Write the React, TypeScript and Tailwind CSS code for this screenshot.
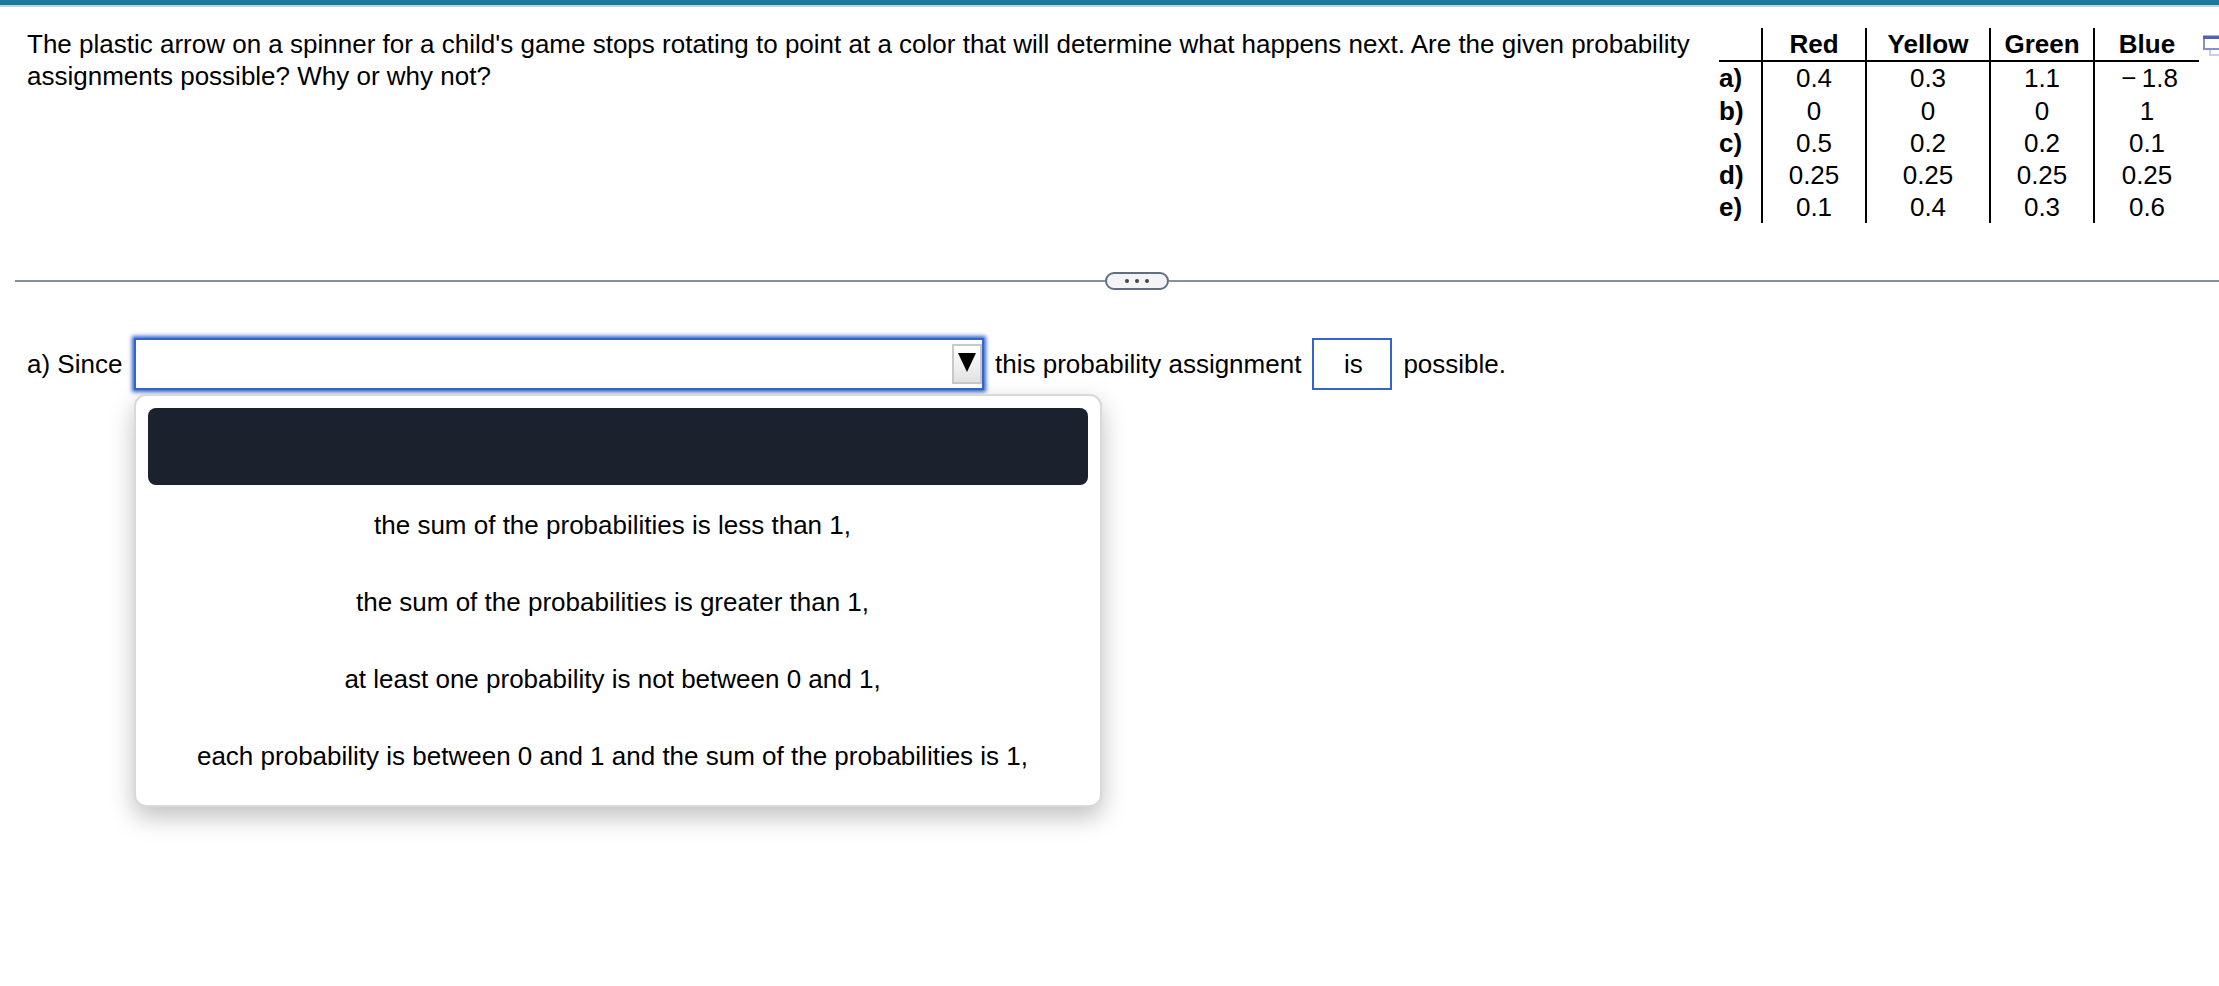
import React, { useState } from 'react';

const colors = ['Red', 'Yellow', 'Green', 'Blue'];

const colorWidths = ['w-[104px]', 'w-[124px]', 'w-[104px]', 'w-[105px]'];

const rows = [
  { label: 'a)', values: ['0.4', '0.3', '1.1', '\u2009−\u20091.8'] },
  { label: 'b)', values: ['0', '0', '0', '1'] },
  { label: 'c)', values: ['0.5', '0.2', '0.2', '0.1'] },
  { label: 'd)', values: ['0.25', '0.25', '0.25', '0.25'] },
  { label: 'e)', values: ['0.1', '0.4', '0.3', '0.6'] },
];

const reasons = [
  '',
  'the sum of the probabilities is less than 1,',
  'the sum of the probabilities is greater than 1,',
  'at least one probability is not between 0 and 1,',
  'each probability is between 0 and 1 and the sum of the probabilities is 1,',
];

const ProbabilityTable: React.FC = () => (
  <table className="shrink-0 table-fixed border-collapse text-center">
    <thead>
      <tr className="border-b-2 border-black">
        <td className="w-[43px] p-0"></td>
        {colors.map((color, i) => (
          <th key={color} scope="col" className={`${colorWidths[i]} border-l-2 border-black p-0 font-bold`}>
            {color}
          </th>
        ))}
      </tr>
    </thead>
    <tbody>
      {rows.map((row) => (
        <tr key={row.label} className="align-top first:h-[34px]">
          <th scope="row" className="p-0 text-left font-bold">{row.label}</th>
          {row.values.map((value, i) => (
            <td key={colors[i]} className="border-l-2 border-black p-0">{value}</td>
          ))}
        </tr>
      ))}
    </tbody>
  </table>
);

const PopupIcon: React.FC = () => (
  <svg width="28" height="22" viewBox="0 0 28 22" fill="none">
    <rect x="7" y="9" width="20" height="11" fill="#fff" stroke="#c9cde9" strokeWidth="2" />
    <rect x="1" y="2" width="20" height="12" fill="#fff" stroke="#8790ca" strokeWidth="2" />
    <rect x="0" y="0" width="22" height="1" fill="#a9b0da" />
    <rect x="0" y="1" width="22" height="3" fill="#5460ad" />
  </svg>
);

const App: React.FC = () => {
  const [reason, setReason] = useState('');
  const [verdict, setVerdict] = useState('is');
  const [open, setOpen] = useState(true);

  const pickReason = (value: string) => {
    setReason(value);
    setOpen(false);
  };

  return (
    <div className="min-h-screen overflow-hidden bg-white font-['Liberation_Sans',Arial,sans-serif] text-[26px] leading-8 text-black">
      <div className="h-[7px] border-b-2 border-[#c9cde0] bg-[#187a9b]"></div>

      <section className="flex items-start pt-[21px] pl-[27px]">
        <p className="min-w-0 flex-1">
          The plastic arrow on a spinner for a child's game stops rotating to point at a color that will determine what
          happens next. Are the given probability assignments possible? Why or why not?
        </p>
        <div className="-mr-3 ml-6 flex shrink-0 items-start">
          <ProbabilityTable />
          <button type="button" aria-label="Open table in a new window" className="mt-[7px] ml-1">
            <PopupIcon />
          </button>
        </div>
      </section>

      {/* Splitter between the question and the answer area */}
      <div className="mt-[49px] -mr-10 ml-[15px] flex items-center">
        <div className="h-[2px] flex-1 bg-[#8490a0]"></div>
        <button
          type="button"
          aria-label="Resize question area"
          className="flex h-[18px] w-16 items-center justify-center gap-[6px] rounded-full border-2 border-[#5f6f80] bg-[#f3f4f6]"
        >
          <span className="size-1 rounded-full bg-[#444]"></span>
          <span className="size-1 rounded-full bg-[#444]"></span>
          <span className="size-1 rounded-full bg-[#444]"></span>
        </button>
        <div className="h-[2px] flex-1 bg-[#8490a0]"></div>
      </div>

      <section className="mt-12 flex items-center pl-[27px]">
        <label htmlFor="reason" className="w-[107px]">a) Since</label>
        <div className="relative">
          <div className="flex h-[52px] w-[850px] items-center border-2 border-[#3366cc] bg-white shadow-[0_0_4px_2px_#3366cc]">
            <select
              id="reason"
              value={reason}
              onChange={(e) => setReason(e.target.value)}
              className="h-full min-w-0 flex-1 appearance-none bg-transparent text-center outline-none"
            >
              {reasons.map((text) => (
                <option key={text} value={text}>{text}</option>
              ))}
            </select>
            <button
              type="button"
              aria-label="Show answers"
              onClick={() => setOpen(!open)}
              className="flex h-10 w-[30px] items-start justify-center border-2 border-[#c8c8c8] bg-linear-to-b from-white to-[#e2e2e2] pt-[7px]"
            >
              <svg width="18" height="19" viewBox="0 0 18 19">
                <path d="M0 0H18L9 19Z" fill="#000" />
              </svg>
            </button>
          </div>

          {open && (
            <ul
              role="listbox"
              className="absolute top-14 left-0 w-[968px] rounded-xl border-2 border-[#d9d9d9] bg-white p-3 shadow-[0_10px_24px_rgba(0,0,0,0.25)]"
            >
              {reasons.map((text) => (
                <li key={text} role="option" aria-selected={text === reason}>
                  <button
                    type="button"
                    aria-label={text || 'No answer'}
                    onClick={() => pickReason(text)}
                    className={`block h-[77px] w-full rounded-lg pt-[2px] pr-[11px] ${text === reason ? 'bg-[#1c222d] text-white' : ''}`}
                  >
                    {text}
                  </button>
                </li>
              ))}
            </ul>
          )}
        </div>
        <label htmlFor="verdict" className="ml-[11px]">this probability assignment</label>
        <select
          id="verdict"
          value={verdict}
          onChange={(e) => setVerdict(e.target.value)}
          className="mx-[11px] h-[52px] w-20 appearance-none border-2 border-[#3366cc] bg-white pl-[2px] text-center"
        >
          <option value="is">is</option>
          <option value="is not">is not</option>
        </select>
        <span>possible.</span>
      </section>
    </div>
  );
};

export default App;
